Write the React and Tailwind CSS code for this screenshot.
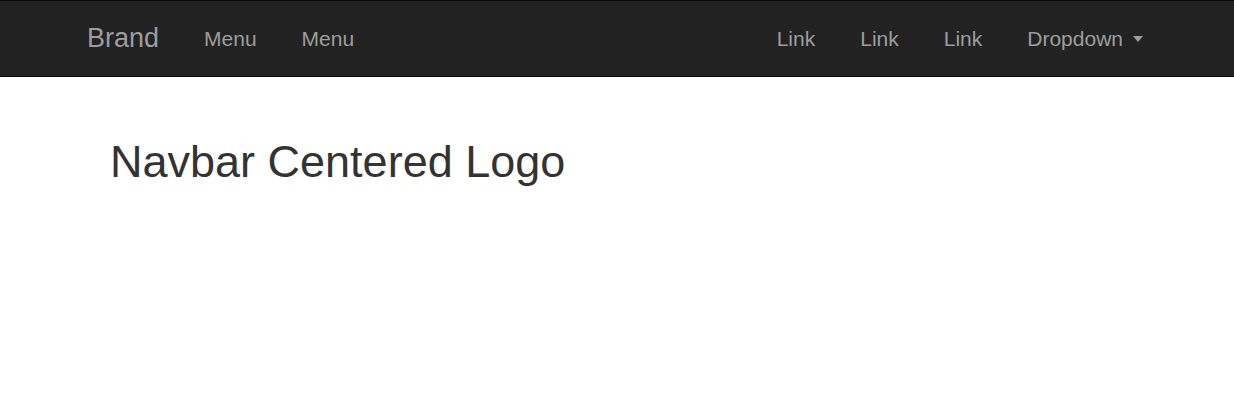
import React from "react";

const leftLinks = ["Menu", "Menu"];
const rightLinks = ["Link", "Link", "Link"];

function App() {
  return (
    <div
      className="min-h-[418px] bg-white"
      style={{ fontFamily: '"Liberation Sans", Arial, sans-serif' }}
    >
      {/* ================= NAVBAR ================= */}
      <nav className="h-[77px] bg-[#222222] border-y border-[#080808] flex items-center justify-between pl-[65px] pr-[69px]">
        <div className="flex items-center h-full">
          <a className="px-[22px] text-[27px] text-[#9d9d9d] leading-none">
            Brand
          </a>
          {leftLinks.map((label, i) => (
            <a
              key={i}
              className="px-[22px] text-[21px] text-[#9d9d9d] leading-none ml-[1px]"
            >
              {label}
            </a>
          ))}
        </div>

        <div className="flex items-center h-full">
          {rightLinks.map((label, i) => (
            <a
              key={i}
              className="px-[22px] text-[21px] text-[#9d9d9d] leading-none ml-[1px]"
            >
              {label}
            </a>
          ))}
          <a className="px-[22px] text-[21px] text-[#9d9d9d] leading-none ml-[1px] flex items-center">
            Dropdown
            <span className="ml-[10px] w-0 h-0 border-x-[5px] border-x-transparent border-t-[6px] border-t-[#9d9d9d]" />
          </a>
        </div>
      </nav>

      {/* ================= CONTENT ================= */}
      <div className="pl-[110px] pt-[60px]">
        <h1 className="text-[45px] leading-[1.1] text-[#333333]">
          Navbar Centered Logo
        </h1>
      </div>
    </div>
  );
}

export default App;
